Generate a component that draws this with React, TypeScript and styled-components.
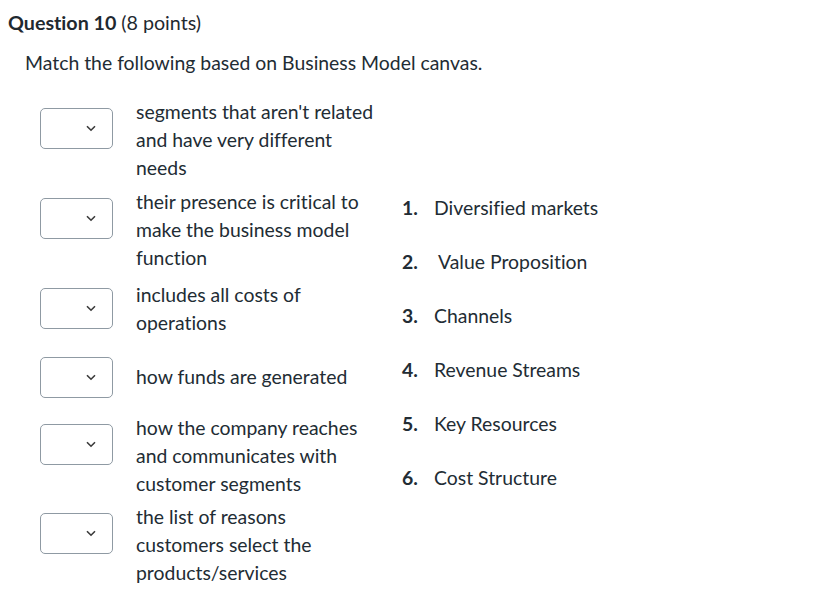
import styled, { createGlobalStyle } from 'styled-components';

const GlobalStyle = createGlobalStyle`
    body {
        margin: 0;
        background: #ffffff;
        font-family: Lato, "Open Sans", sans-serif;
        font-variant-ligatures: none;
        color: #222c34;
    }
`;

const Page = styled.div`
    width: 830px;
    height: 607px;
    padding: 10px 0 0 8px;
    box-sizing: border-box;
`;

const Title = styled.h2`
    margin: 0;
    font-size: 19.7px;
    line-height: 25px;
    font-weight: 700;
    color: #1f2930;

    span {
        font-weight: 400;
    }
`;

const Prompt = styled.p`
    margin: 14px 0 0 17px;
    font-size: 19.4px;
    line-height: 28px;
`;

const Body = styled.div`
    display: flex;
    margin: 21px 0 0 32px;
`;

const Pairs = styled.div`
    width: 362px;
`;

const Row = styled.div<{ $top: number }>`
    display: flex;
    align-items: flex-start;
    margin-top: ${(p) => p.$top}px;
`;

const SelectBox = styled.div<{ $top: number }>`
    flex: none;
    position: relative;
    width: 71px;
    height: 39px;
    margin-top: ${(p) => p.$top}px;
    margin-right: 23px;
    border: 1px solid #8f9aa3;
    border-radius: 5px;
    background: #fff;

    svg {
        position: absolute;
        right: 16px;
        top: 16px;
    }
`;

const Stem = styled.div`
    font-size: 19.4px;
    line-height: 28px;
    width: 250px;
`;

const Choices = styled.ol`
    list-style: none;
    margin: 96px 0 0 0;
    padding: 0;
    display: flex;
    flex-direction: column;
    gap: 26px;
`;

const Choice = styled.li<{ $indent: number }>`
    display: flex;
    font-size: 19.4px;
    line-height: 28px;

    b {
        width: ${(p) => 32 + p.$indent}px;
        font-weight: 700;
    }
`;

const Chevron = () => (
    <svg width="10" height="7" viewBox="0 0 10 7">
        <path d="M1 1.2 L5 5.2 L9 1.2" fill="none" stroke="#3a3a3a" strokeWidth="1.6" />
    </svg>
);

const pairs = [
    { top: 0, box: 10, lines: ["segments that aren't related", 'and have very different', 'needs'] },
    { top: 6, box: 10, lines: ['their presence is critical to', 'make the business model', 'function'] },
    { top: 9, box: 7, lines: ['includes all costs of', 'operations'] },
    { top: 26, box: -6, lines: ['how funds are generated'] },
    { top: 16, box: 10, lines: ['how the company reaches', 'and communicates with', 'customer segments'] },
    { top: 5, box: 10, lines: ['the list of reasons', 'customers select the', 'products/services'] },
];

const choices = [
    { label: 'Diversified markets', indent: 0 },
    { label: 'Value Proposition', indent: 4 },
    { label: 'Channels', indent: 0 },
    { label: 'Revenue Streams', indent: 0 },
    { label: 'Key Resources', indent: 0 },
    { label: 'Cost Structure', indent: 0 },
];

function App() {
    return (
        <Page>
            <GlobalStyle />
            <Title>
                Question 10 <span>(8 points)</span>
            </Title>
            <Prompt>Match the following based on Business Model canvas.</Prompt>
            <Body>
                <Pairs>
                    {pairs.map((pair, i) => (
                        <Row key={i} $top={pair.top}>
                            <SelectBox $top={pair.box}>
                                <Chevron />
                            </SelectBox>
                            <Stem>
                                {pair.lines.map((line) => (
                                    <div key={line}>{line}</div>
                                ))}
                            </Stem>
                        </Row>
                    ))}
                </Pairs>
                <Choices>
                    {choices.map((c, i) => (
                        <Choice key={c.label} $indent={c.indent}>
                            <b>{i + 1}.</b>
                            {c.label}
                        </Choice>
                    ))}
                </Choices>
            </Body>
        </Page>
    );
}

export default App;
